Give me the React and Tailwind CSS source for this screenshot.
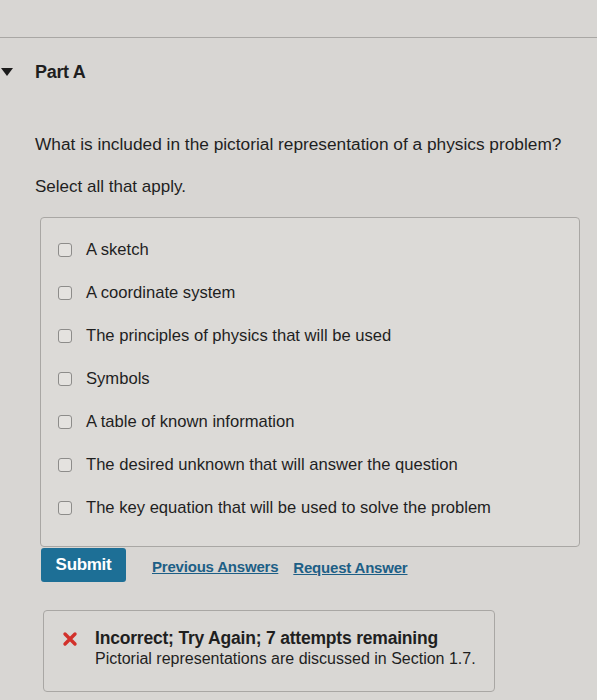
import React from 'react';

const options = [
  'A sketch',
  'A coordinate system',
  'The principles of physics that will be used',
  'Symbols',
  'A table of known information',
  'The desired unknown that will answer the question',
  'The key equation that will be used to solve the problem',
];

export default function App() {
  return (
    <div
      className="w-[597px] h-[700px] overflow-hidden bg-[#d8d6d3] text-[#1f1f1f]"
      style={{ fontFamily: '"Liberation Sans", Arial, sans-serif' }}
    >
      {/* top rule */}
      <div className="h-[38px] border-b border-[#a9a7a4]" />

      {/* Part header */}
      <div className="flex items-center h-[66px] pt-[2px]">
        <span className="ml-[1px] w-0 h-0 border-l-[6px] border-r-[6px] border-t-[8px] border-l-transparent border-r-transparent border-t-[#1c1c1c]" />
        <span className="ml-[22px] text-[18px] font-bold tracking-[-0.3px]">Part A</span>
      </div>

      <div className="pl-[35px] pr-[10px]">
        <p className="mt-[30px] text-[17.3px] leading-[20px] whitespace-nowrap">
          What is included in the pictorial representation of a physics problem?
        </p>
        <p className="mt-[23px] text-[17px] leading-[20px]">Select all that apply.</p>

        {/* options box */}
        <div className="mt-[20px] ml-[5px] w-[540px] rounded-[4px] border border-[#a9a7a4] bg-[#dcdad7] pt-[22px] pb-[28px]">
          <div className="flex flex-col gap-[23px]">
            {options.map((o) => (
              <label key={o} className="flex items-center pl-[17px] h-[20px]">
                <span className="w-[14px] h-[14px] rounded-[3px] border border-[#8d8c8a] bg-[#e4e2df]" />
                <span className="ml-[14px] text-[16.6px] leading-[20px]">{o}</span>
              </label>
            ))}
          </div>
        </div>

        {/* actions */}
        <div className="flex items-center mt-[1px] ml-[6px]">
          <button className="h-[34px] w-[85px] rounded-[3px] bg-[#1d6f96] text-white text-[17px] font-bold tracking-[-0.3px]">
            Submit
          </button>
          <a className="ml-[26px] mt-[4px] text-[15px] font-bold text-[#1d5f86] underline tracking-[-0.2px]">Previous Answers</a>
          <a className="ml-[15px] mt-[7px] text-[15px] font-bold text-[#1d5f86] underline tracking-[-0.2px]">Request Answer</a>
        </div>

        {/* feedback */}
        <div className="mt-[28px] ml-[8px] w-[452px] rounded-[4px] border border-[#a9a7a4] bg-[#d9d7d4] pt-[17px] pb-[22px] pl-[18px] flex">
          <svg width="16" height="16" viewBox="0 0 16 16" className="mt-[3px]">
            <path d="M3 3 L13 13 M13 3 L3 13" stroke="#d2312b" strokeWidth="3.4" strokeLinecap="round" />
          </svg>
          <div className="ml-[17px]">
            <div className="text-[17.5px] font-bold leading-[21px] tracking-[-0.2px]">
              Incorrect; Try Again; 7 attempts remaining
            </div>
            <div className="text-[16px] leading-[20px]">
              Pictorial representations are discussed in Section 1.7.
            </div>
          </div>
        </div>
      </div>
    </div>
  );
}
